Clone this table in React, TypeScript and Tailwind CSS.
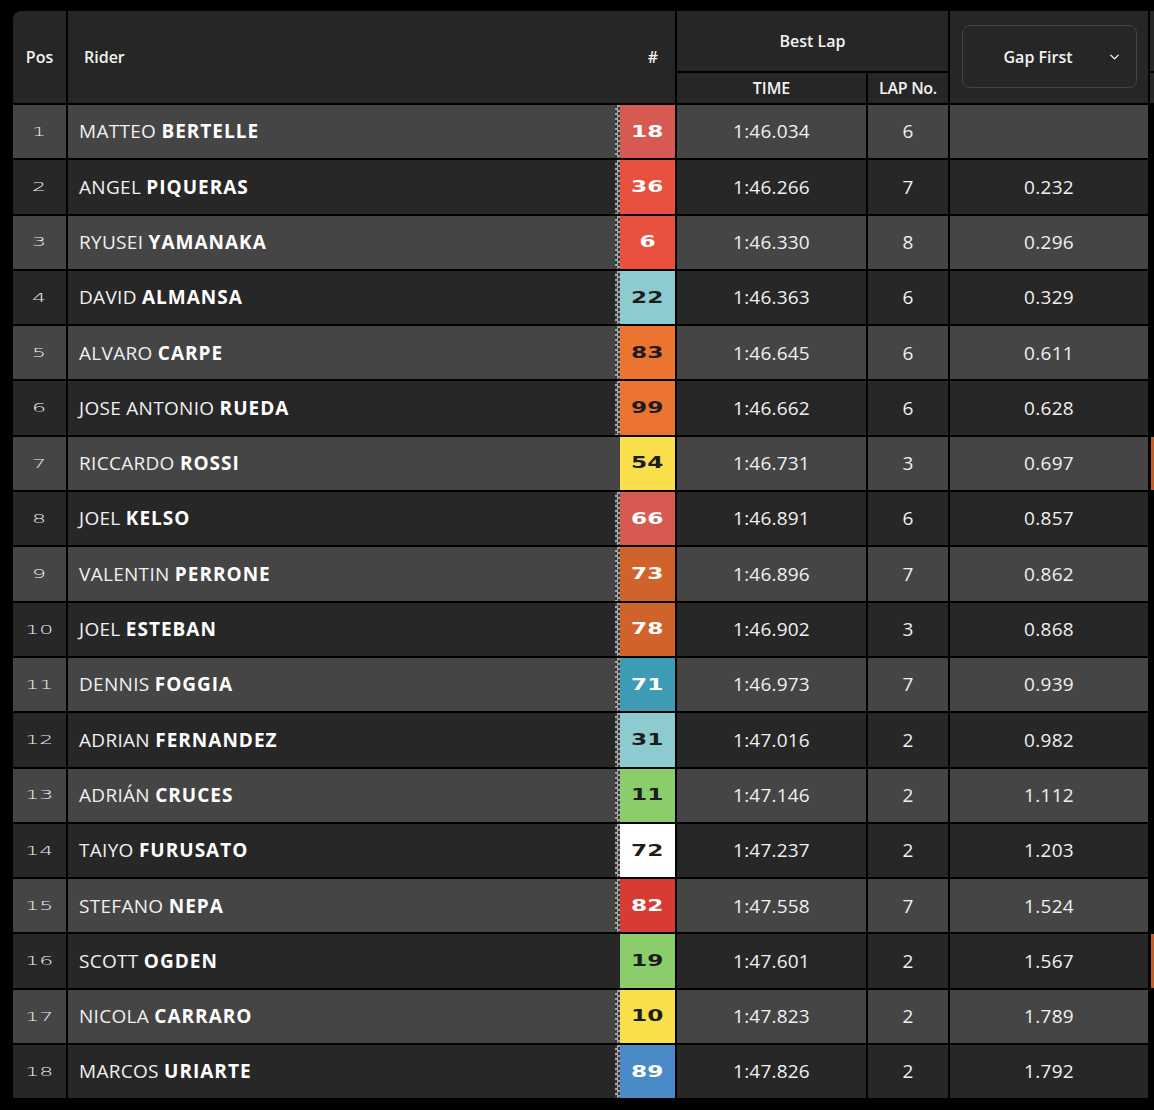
import React from "react";
import { ChevronDown } from "lucide-react";

type Rider = {
  pos: number;
  first: string;
  last: string;
  num: string;
  badge: string;
  time: string;
  lap: string;
  gap: string;
  flag: boolean;
  bar: boolean;
};

const riders: Rider[] = [
  { pos: 1, first: "MATTEO", last: "BERTELLE", num: "18", badge: "bg-[#d65a52] text-white", time: "1:46.034", lap: "6", gap: "", flag: true, bar: false },
  { pos: 2, first: "ANGEL", last: "PIQUERAS", num: "36", badge: "bg-[#e9513f] text-white", time: "1:46.266", lap: "7", gap: "0.232", flag: true, bar: false },
  { pos: 3, first: "RYUSEI", last: "YAMANAKA", num: "6", badge: "bg-[#e9513f] text-white", time: "1:46.330", lap: "8", gap: "0.296", flag: true, bar: false },
  { pos: 4, first: "DAVID", last: "ALMANSA", num: "22", badge: "bg-[#8ecbd1] text-[#1c1c1c]", time: "1:46.363", lap: "6", gap: "0.329", flag: true, bar: false },
  { pos: 5, first: "ALVARO", last: "CARPE", num: "83", badge: "bg-[#ec7431] text-[#1c1c1c]", time: "1:46.645", lap: "6", gap: "0.611", flag: true, bar: false },
  { pos: 6, first: "JOSE ANTONIO", last: "RUEDA", num: "99", badge: "bg-[#ec7431] text-[#1c1c1c]", time: "1:46.662", lap: "6", gap: "0.628", flag: true, bar: false },
  { pos: 7, first: "RICCARDO", last: "ROSSI", num: "54", badge: "bg-[#f8df4b] text-[#1c1c1c]", time: "1:46.731", lap: "3", gap: "0.697", flag: false, bar: true },
  { pos: 8, first: "JOEL", last: "KELSO", num: "66", badge: "bg-[#d65a52] text-white", time: "1:46.891", lap: "6", gap: "0.857", flag: true, bar: false },
  { pos: 9, first: "VALENTIN", last: "PERRONE", num: "73", badge: "bg-[#d0632b] text-white", time: "1:46.896", lap: "7", gap: "0.862", flag: true, bar: false },
  { pos: 10, first: "JOEL", last: "ESTEBAN", num: "78", badge: "bg-[#d0632b] text-white", time: "1:46.902", lap: "3", gap: "0.868", flag: true, bar: false },
  { pos: 11, first: "DENNIS", last: "FOGGIA", num: "71", badge: "bg-[#3e9bb4] text-white", time: "1:46.973", lap: "7", gap: "0.939", flag: true, bar: false },
  { pos: 12, first: "ADRIAN", last: "FERNANDEZ", num: "31", badge: "bg-[#8ecbd1] text-[#1c1c1c]", time: "1:47.016", lap: "2", gap: "0.982", flag: true, bar: false },
  { pos: 13, first: "ADRIÁN", last: "CRUCES", num: "11", badge: "bg-[#8ccd6b] text-[#1c1c1c]", time: "1:47.146", lap: "2", gap: "1.112", flag: true, bar: false },
  { pos: 14, first: "TAIYO", last: "FURUSATO", num: "72", badge: "bg-white text-[#1c1c1c]", time: "1:47.237", lap: "2", gap: "1.203", flag: true, bar: false },
  { pos: 15, first: "STEFANO", last: "NEPA", num: "82", badge: "bg-[#d63b34] text-white", time: "1:47.558", lap: "7", gap: "1.524", flag: true, bar: false },
  { pos: 16, first: "SCOTT", last: "OGDEN", num: "19", badge: "bg-[#8ccd6b] text-[#1c1c1c]", time: "1:47.601", lap: "2", gap: "1.567", flag: false, bar: true },
  { pos: 17, first: "NICOLA", last: "CARRARO", num: "10", badge: "bg-[#f8df4b] text-[#1c1c1c]", time: "1:47.823", lap: "2", gap: "1.789", flag: true, bar: false },
  { pos: 18, first: "MARCOS", last: "URIARTE", num: "89", badge: "bg-[#4a8ac7] text-white", time: "1:47.826", lap: "2", gap: "1.792", flag: true, bar: false },
];

const grid = "grid grid-cols-[53px_607px_189px_80px_198px_60px] gap-x-[2px]";
const digitFont = "font-['DejaVu_Sans',sans-serif]";

function Row({ r }: { r: Rider }) {
  const bg = r.pos % 2 === 1 ? "bg-[#454545]" : "bg-[#272727]";
  return (
    <div className={`${grid} h-[53.3px]`}>
      <div className={`${bg} flex items-center justify-center`}>
        <span className={`${digitFont} font-extralight text-[13px] text-[#ececec] inline-block scale-x-[1.7] scale-y-[0.95]`}>{r.pos}</span>
      </div>
      <div className={`${bg} flex items-stretch`}>
        <div className="flex-1 flex items-center pl-[11px] text-[19px] text-[#f0f0f0]">
          <span className="tracking-[0.3px]">{r.first}&nbsp;</span>
          <span className="font-bold text-white tracking-[1px]">{r.last}</span>
        </div>
        {r.flag ? (
          <div className="w-[5px] bg-[repeating-conic-gradient(#a3a3a3_0%_25%,#3a3a3a_0%_50%)] bg-[length:5px_5px]" />
        ) : (
          <div className="w-[5px]" />
        )}
        <div className={`${r.badge} w-[55px] flex items-center justify-center`}>
          <span className={`${digitFont} font-bold text-[16px] inline-block scale-x-[1.45] scale-y-[0.95]`}>{r.num}</span>
        </div>
      </div>
      <div className={`${bg} flex items-center justify-center text-[19px] text-[#f0f0f0] tracking-[0.2px]`}>{r.time}</div>
      <div className={`${bg} flex items-center justify-center text-[19px] text-[#f0f0f0]`}>{r.lap}</div>
      <div className={`${bg} flex items-center justify-center text-[19px] text-[#f0f0f0] tracking-[0.3px]`}>{r.gap}</div>
      <div className="bg-black flex">
        {r.bar && <div className="ml-[1px] w-[4px] bg-[#c0612b]" />}
      </div>
    </div>
  );
}

export default function App() {
  return (
    <div className="w-[1154px] h-[1110px] bg-black overflow-hidden pl-[13px] pt-[11px] font-['Open_Sans',sans-serif]">
      <div className="w-[1200px] flex flex-col gap-[2px] rounded-tl-lg overflow-hidden">
        <div className={`${grid} h-[92px]`}>
          <div className="bg-[#262626] flex items-center justify-center text-[16px] font-semibold text-[#f2f2f2]">Pos</div>
          <div className="bg-[#262626] flex items-center justify-between pl-[16px] pr-[17px] text-[16px] font-semibold text-[#f2f2f2]">
            <span>Rider</span>
            <span>#</span>
          </div>
          <div className="col-span-2 flex flex-col gap-[2px] bg-black">
            <div className="h-[60px] bg-[#262626] flex items-center justify-center text-[16px] font-semibold text-[#f2f2f2]">Best Lap</div>
            <div className="h-[30px] grid grid-cols-[189px_80px] gap-x-[2px]">
              <div className="bg-[#262626] flex items-center justify-center text-[16px] font-semibold text-[#f2f2f2]">TIME</div>
              <div className="bg-[#262626] flex items-center justify-center text-[16px] font-semibold text-[#f2f2f2] tracking-[-0.3px]">LAP No.</div>
            </div>
          </div>
          <div className="bg-[#262626] pl-[12px] pr-[11px] pt-[14px] pb-[15px] flex">
            <div className="flex-1 rounded-lg border border-[#424242] flex items-center justify-center relative text-[16px] font-semibold text-[#f2f2f2]">
              <span className="mr-[23px]">Gap First</span>
              <ChevronDown className="absolute right-[14px] top-1/2 -translate-y-1/2 text-white" size={15} strokeWidth={2} />
            </div>
          </div>
          <div className="flex flex-col gap-[2px] bg-black">
            <div className="h-[60px] bg-[#262626]" />
            <div className="h-[30px] bg-[#262626]" />
          </div>
        </div>
        {riders.map((r) => (
          <Row key={r.pos} r={r} />
        ))}
      </div>
    </div>
  );
}
